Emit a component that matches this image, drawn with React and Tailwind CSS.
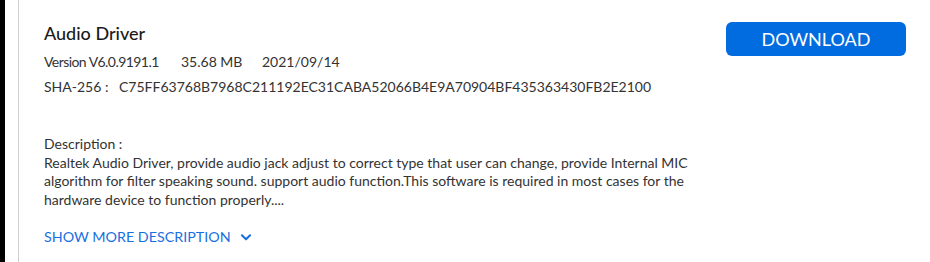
export default function App() {
  return (
    <div className="flex h-[262px] w-[930px] bg-white" style={{ fontFamily: 'Lato, "Noto Sans", sans-serif' }}>
      <div className="w-[5px] shrink-0 bg-black" />
      <div className="ml-[13px] w-px shrink-0 bg-[#cfcfcf]" />
      <div className="flex flex-1 pl-[25px] pt-[22px]">
        {/* Left: info */}
        <div className="w-[665px] text-[14px] text-[#333]">
          <h3 className="text-[18px] font-medium leading-[22px] text-[#1a1a1a]">Audio Driver</h3>
          <div className="mt-[9px] flex leading-[18px]">
            <span className="w-[137px] shrink-0 tracking-[-0.04em]">Version V6.0.9191.1</span>
            <span className="w-[81px] shrink-0">35.68 MB</span>
            <span>2021/09/14</span>
          </div>
          <div className="mt-[7px] flex leading-[18px]">
            <span className="w-[75px] shrink-0">SHA-256 :</span>
            <span>C75FF63768B7968C211192EC31CABA52066B4E9A70904BF435363430FB2E2100</span>
          </div>
          <div className="mt-[39px] leading-[18.5px]">
            <p>Description :</p>
            <p>
              Realtek Audio Driver, provide audio jack adjust to correct type that user can change, provide Internal MIC algorithm for filter speaking sound. support audio function.This software is required in most cases for the hardware device to function properly....
            </p>
          </div>
          <button type="button" className="mt-[17px] flex items-center gap-[8px] text-[14.3px] text-[#1a6fe0]">
            SHOW MORE DESCRIPTION
            <svg className="h-[14px] w-[14px]" viewBox="0 0 24 24" fill="none" stroke="currentColor" strokeWidth="3.5" strokeLinecap="round" strokeLinejoin="round">
              <path d="M5 9l7 7 7-7" />
            </svg>
          </button>
        </div>
        {/* Right: download */}
        <div className="ml-[17px]">
          <button type="button" className="h-[34px] w-[180px] rounded-[6px] bg-[#006ce0] text-[18px] text-white">
            DOWNLOAD
          </button>
        </div>
      </div>
    </div>
  );
}
